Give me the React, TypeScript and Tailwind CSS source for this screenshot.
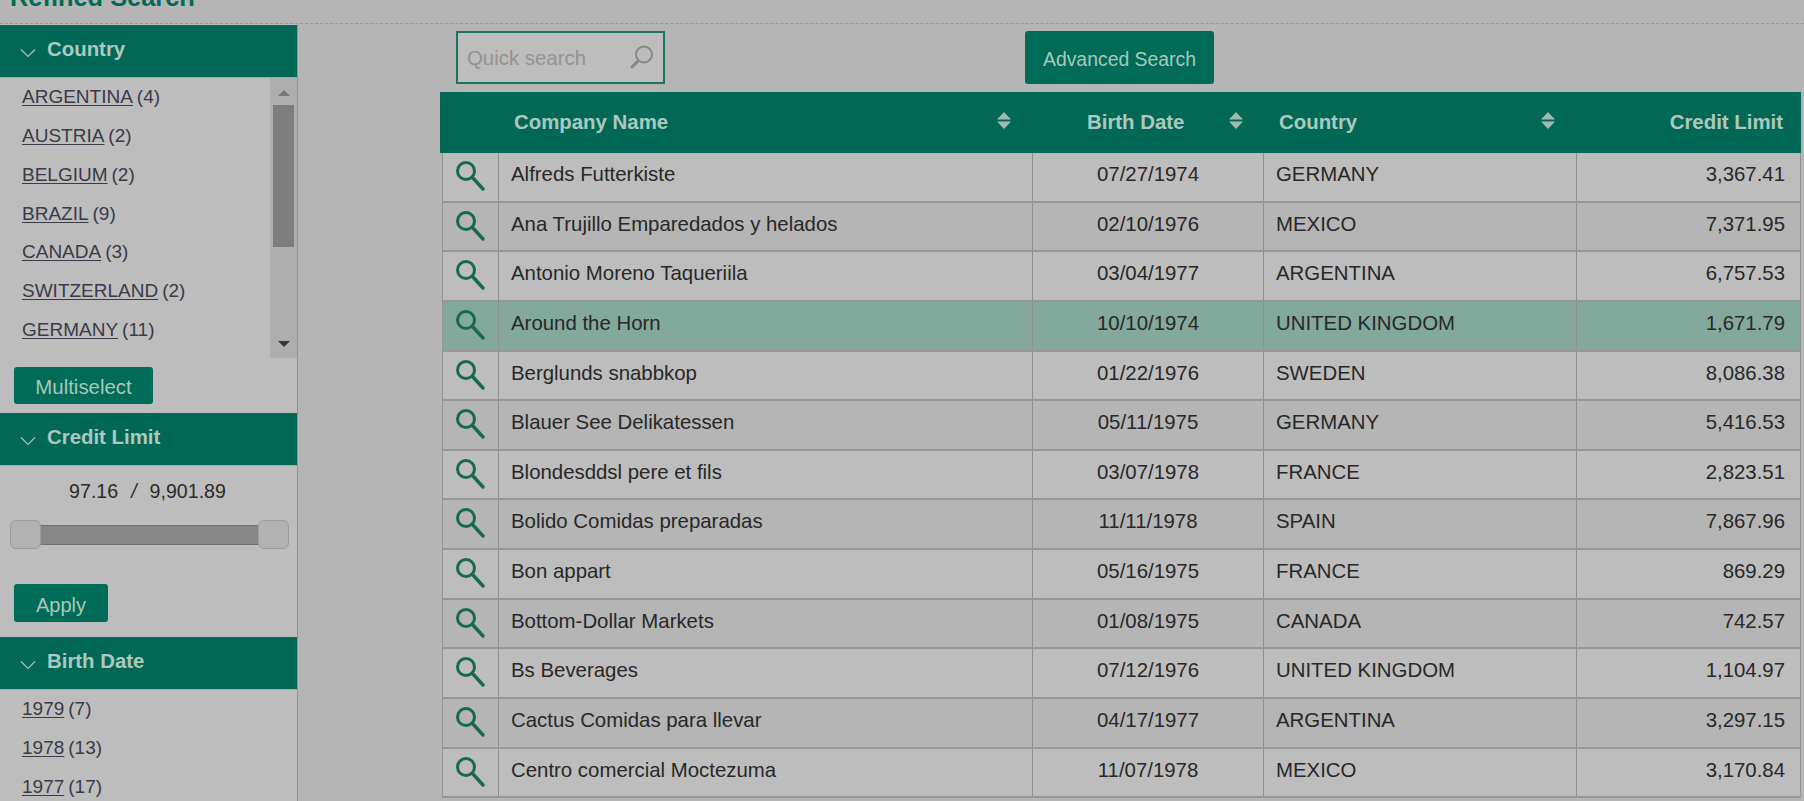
import React from "react";

const rows = [
  ["Alfreds Futterkiste", "07/27/1974", "GERMANY", "3,367.41"],
  ["Ana Trujillo Emparedados y helados", "02/10/1976", "MEXICO", "7,371.95"],
  ["Antonio Moreno Taqueriila", "03/04/1977", "ARGENTINA", "6,757.53"],
  ["Around the Horn", "10/10/1974", "UNITED KINGDOM", "1,671.79"],
  ["Berglunds snabbkop", "01/22/1976", "SWEDEN", "8,086.38"],
  ["Blauer See Delikatessen", "05/11/1975", "GERMANY", "5,416.53"],
  ["Blondesddsl pere et fils", "03/07/1978", "FRANCE", "2,823.51"],
  ["Bolido Comidas preparadas", "11/11/1978", "SPAIN", "7,867.96"],
  ["Bon appart", "05/16/1975", "FRANCE", "869.29"],
  ["Bottom-Dollar Markets", "01/08/1975", "CANADA", "742.57"],
  ["Bs Beverages", "07/12/1976", "UNITED KINGDOM", "1,104.97"],
  ["Cactus Comidas para llevar", "04/17/1977", "ARGENTINA", "3,297.15"],
  ["Centro comercial Moctezuma", "11/07/1978", "MEXICO", "3,170.84"],
];

const countries = [
  ["ARGENTINA", "(4)"],
  ["AUSTRIA", "(2)"],
  ["BELGIUM", "(2)"],
  ["BRAZIL", "(9)"],
  ["CANADA", "(3)"],
  ["SWITZERLAND", "(2)"],
  ["GERMANY", "(11)"],
];

const years = [
  ["1979", "(7)"],
  ["1978", "(13)"],
  ["1977", "(17)"],
];

function Chevron() {
  return (
    <svg width="16" height="10" viewBox="0 0 16 10" fill="none" className="relative top-[2px] shrink-0">
      <path d="M1 1.5 L8 8.5 L15 1.5" stroke="#a9c4bb" strokeWidth="1.2" />
    </svg>
  );
}

function PanelHeader({ title }: { title: string }) {
  return (
    <div className="flex h-[52px] items-center gap-[11px] bg-[#006855] pl-[20px] text-[20.4px] font-bold text-[#adc8be]">
      <Chevron />
      <span className="relative -top-[2px]">{title}</span>
    </div>
  );
}

function FacetItem({ label, count }: { label: string; count: string }) {
  return (
    <div className="flex h-[38.8px] items-center gap-[4px] pl-[22px] text-[19px] text-[#3a3a48]">
      <span className="underline underline-offset-2">{label}</span>
      <span>{count}</span>
    </div>
  );
}

function GreenButton({ label, className }: { label: string; className: string }) {
  return (
    <button className={"flex items-center justify-center rounded-[3px] bg-[#006b57] text-[#a9c7bd] " + className}>
      {label}
    </button>
  );
}

function RowIcon() {
  return (
    <svg width="30" height="32" viewBox="0 0 30 32" fill="none">
      <circle cx="11" cy="11" r="8.5" stroke="#17694f" strokeWidth="3" />
      <path d="M17.5 17.5 L28 29" stroke="#17694f" strokeWidth="3.4" strokeLinecap="round" />
    </svg>
  );
}

function SortIcon() {
  return (
    <svg width="14" height="17" viewBox="0 0 14 17" className="relative -top-[1px] shrink-0">
      <path d="M7 0 L14 7.5 H0 Z" fill="#a5b9b0" />
      <path d="M0 9.5 H14 L7 17 Z" fill="#a5b9b0" />
    </svg>
  );
}

const cols = "grid grid-cols-[56px_534px_231px_313px_1fr]";

export default function App() {
  return (
    <div className="flex h-[801px] w-[1804px] flex-col overflow-hidden bg-[#b5b5b5] font-['Liberation_Sans',Arial,sans-serif]">
      <div className="h-[24px] shrink-0 overflow-hidden border-b border-dashed border-[#979797] pr-[4px]">
        <div className="-mt-[17px] pl-[10px] text-[25.4px] font-bold leading-[28px] text-[#006b57]">Refined Search</div>
      </div>

      <div className="flex min-h-0 flex-1">
        <aside className="w-[298px] shrink-0 border-r border-[#929292] bg-[#bdbdbd] pt-[1px]">
          <PanelHeader title="Country" />
          <div className="flex h-[281px] border-t border-[#a5a5a5]">
            <div className="flex-1">
              {countries.map(([l, c]) => (
                <FacetItem key={l} label={l} count={c} />
              ))}
            </div>
            <div className="flex w-[27px] flex-col items-center bg-[#aeaeae] pt-[12px]">
              <div className="h-0 w-0 border-x-[6px] border-b-[6px] border-x-transparent border-b-[#777777]" />
              <div className="mt-[9px] h-[142px] w-[21px] bg-[#7e7e7e]" />
              <div className="mt-[94px] h-0 w-0 border-x-[6px] border-t-[6px] border-x-transparent border-t-[#363636]" />
            </div>
          </div>
          <div className="pb-[9px] pl-[14px] pt-[9px]">
            <GreenButton label="Multiselect" className="h-[37px] w-[139px] pt-[3px] text-[20.4px]" />
          </div>
          <PanelHeader title="Credit Limit" />
          <div className="h-[172px] border-t border-[#a5a5a5]">
            <div className="flex h-[48px] items-center justify-center gap-[13px] pr-[2px] pt-[4px] text-[19.6px] text-[#2b2b2b]">
              <span>97.16</span>
              <span className="italic">/</span>
              <span>9,901.89</span>
            </div>
            <div className="relative ml-[10px] mt-[6px] flex h-[29px] w-[279px] items-center">
              <div className="mx-[20px] h-[20px] flex-1 border-y border-[#707070] bg-[#878787]" />
              <div className="absolute left-0 top-0 h-[29px] w-[31px] rounded-[6px] border border-[#9c9c9c] bg-[#b2b2b2]" />
              <div className="absolute right-0 top-0 h-[29px] w-[31px] rounded-[6px] border border-[#9c9c9c] bg-[#b2b2b2]" />
            </div>
            <div className="ml-[14px] mt-[35px]">
              <GreenButton label="Apply" className="h-[38px] w-[94px] pt-[3px] text-[20px]" />
            </div>
          </div>
          <PanelHeader title="Birth Date" />
          <div className="border-t border-[#a5a5a5]">
            {years.map(([l, c]) => (
              <FacetItem key={l} label={l} count={c} />
            ))}
          </div>
        </aside>

        <main className="min-w-0 flex-1 pl-[142px] pr-[3px]">
          <div className="flex h-[68px] items-start pl-[16px] pt-[7px]">
            <div className="flex h-[53px] w-[209px] items-center justify-between border-2 border-[#1a7563] bg-[#bdbdbd] pl-[9px] pr-[9px] pt-[1px] text-[20.4px] text-[#979191]">
              <span>Quick search</span>
              <svg width="24" height="24" viewBox="0 0 24 24" fill="none" className="-mt-[3px]">
                <circle cx="14" cy="9.5" r="8" stroke="#8b8585" strokeWidth="2" />
                <path d="M8 16 L2 22" stroke="#8b8585" strokeWidth="3" strokeLinecap="round" />
              </svg>
            </div>
            <GreenButton label="Advanced Search" className="ml-[360px] h-[53px] w-[189px] pt-[4px] text-[19.4px]" />
          </div>

          <div className="flex h-[61px] items-center bg-[#006855] pb-[1px] text-[20.4px] font-bold text-[#adc8be]">
            <div className="flex w-[592px] items-center justify-between pl-[74px] pr-[21px]">
              <span>Company Name</span>
              <SortIcon />
            </div>
            <div className="flex w-[231px] items-center justify-between pl-[55px] pr-[20px]">
              <span>Birth Date</span>
              <SortIcon />
            </div>
            <div className="flex w-[314px] items-center justify-between pl-[16px] pr-[22px]">
              <span>Country</span>
              <SortIcon />
            </div>
            <div className="flex-1 pr-[18px] text-right">Credit Limit</div>
          </div>

          <div className="ml-[2px] border-l border-r border-[#949494] text-[20.4px] text-[#282828]">
            {rows.map((r, i) => (
              <div
                key={r[0]}
                className={
                  cols +
                  " h-[49.65px] border-b-2 border-[#979797] " +
                  (i === 3 ? "bg-[#82a99c]" : i % 2 === 0 ? "bg-[#bdbdbd]" : "bg-[#b5b5b5]")
                }
              >
                <div className="flex justify-center border-r border-[#8f8f8f] pr-[1px] pt-[7px]">
                  <RowIcon />
                </div>
                <div className="border-r border-[#8f8f8f] pl-[12px] pt-[9px] leading-[24px]">{r[0]}</div>
                <div className="border-r border-[#8f8f8f] pt-[9px] text-center leading-[24px]">{r[1]}</div>
                <div className="border-r border-[#8f8f8f] pl-[12px] pt-[9px] leading-[24px]">{r[2]}</div>
                <div className="pr-[15px] pt-[9px] text-right leading-[24px]">{r[3]}</div>
              </div>
            ))}
          </div>
        </main>
      </div>
    </div>
  );
}
